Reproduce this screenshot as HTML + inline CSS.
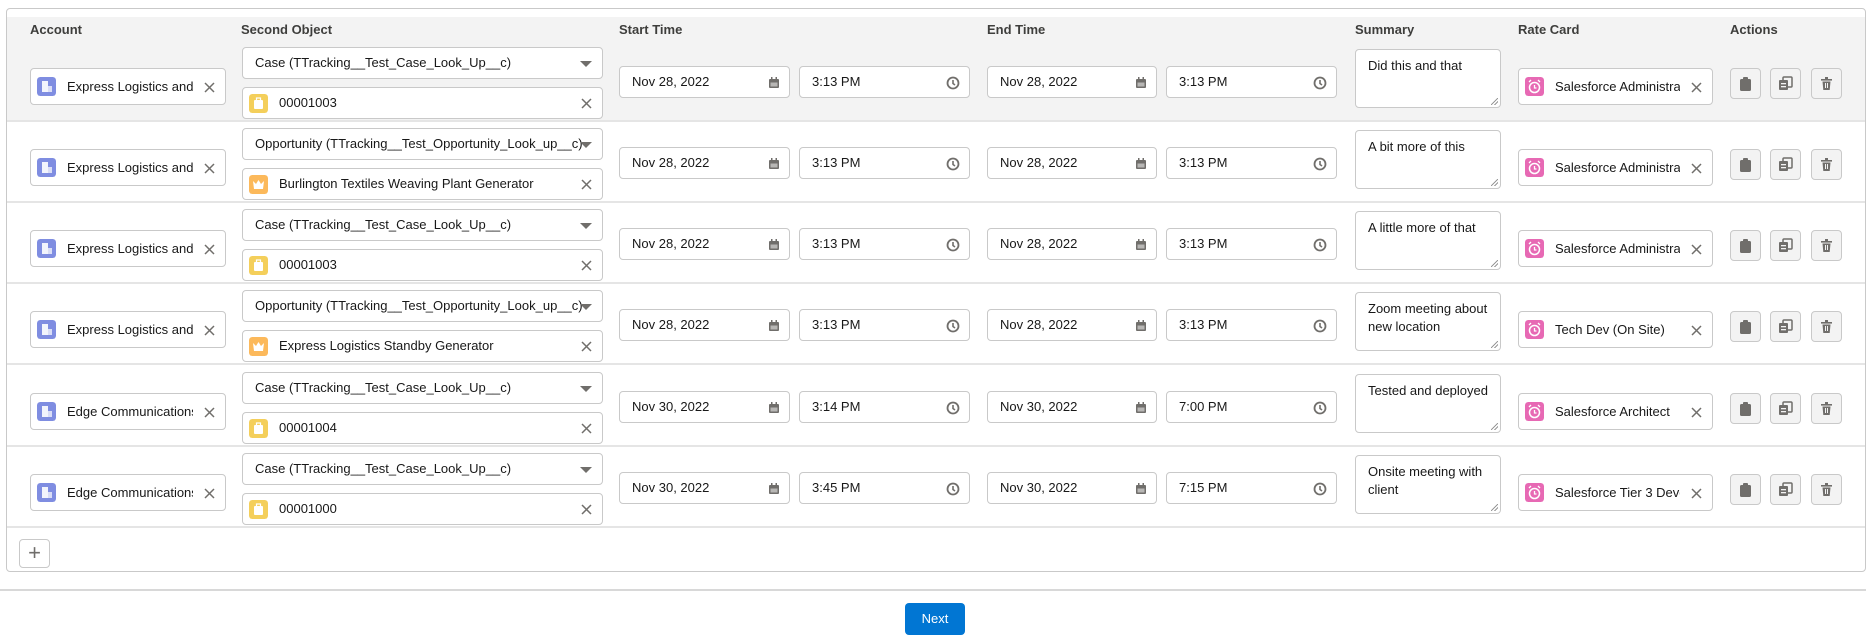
<!DOCTYPE html>
<html><head><meta charset="utf-8"><style>
*{box-sizing:border-box;margin:0;padding:0}
body{width:1873px;height:642px;background:#fff;position:relative;overflow:hidden;font-family:"Liberation Sans",Arial,sans-serif;font-size:13px;color:#181818}
.card{position:absolute;left:6px;top:8px;width:1860px;height:564px;border:1px solid #c9c9c9;border-radius:4px}
.hdr{position:absolute;left:7px;top:17px;width:1858px;height:26px;background:#f3f3f3;border-bottom:2px solid #e5e5e5}
.h{position:absolute;top:22px;font-weight:bold;font-size:13px;color:#3e3e3c}
.row{position:absolute;left:7px;width:1858px;height:81px;border-bottom:2px solid #e5e5e5}
.row.hl{background:#f3f3f3}
.b{position:absolute;background:#fff;border:1px solid #c9c9c9;border-radius:4px;white-space:nowrap;overflow:hidden}
.pill{height:37px;top:27px;line-height:35px}
.pill .t{position:absolute;left:36px;right:32px;overflow:hidden}
.ic{position:absolute;left:6px;top:8px;width:19px;height:19px;border-radius:3px}
.x{position:absolute;right:10px;top:50%;margin-top:-5px;width:11px;height:11px}
.sel{left:235px;width:361px;top:6px;height:32px;line-height:30px;padding-left:12px}
.sel:after{content:"";position:absolute;right:10px;top:13px;border-left:6px solid transparent;border-right:6px solid transparent;border-top:6px solid #706e6b}
.lk{left:235px;width:361px;top:46px;height:32px;line-height:30px}
.lk .t{position:absolute;left:36px}
.lk .ic{top:6px}
.d{top:25px;height:32px;line-height:30px;padding-left:12px}
.d svg{position:absolute;right:9px;top:9px}
.ta{left:1348px;width:146px;top:8px;height:59px;padding:7px 12px;line-height:18px;white-space:normal}
.ta:after{content:"";position:absolute;right:2px;bottom:2px;width:7px;height:7px;background:linear-gradient(135deg,transparent 45%,#999 46%,#999 54%,transparent 55%,transparent 70%,#999 71%,#999 79%,transparent 80%)}
.act{position:absolute;top:27px;width:31px;height:31px;background:#f3f3f3;border:1px solid #c9c9c9;border-radius:4px}
.act svg{position:absolute;left:7px;top:7px}
</style></head><body>
<div class="card"></div>
<div class="hdr"></div>
<div class="h" style="left:30px">Account</div>
<div class="h" style="left:241px">Second Object</div>
<div class="h" style="left:619px">Start Time</div>
<div class="h" style="left:987px">End Time</div>
<div class="h" style="left:1355px">Summary</div>
<div class="h" style="left:1518px">Rate Card</div>
<div class="h" style="left:1730px">Actions</div>

<svg width="0" height="0" style="position:absolute"><defs>
<g id="acc"><rect width="19" height="19" rx="3" fill="#7f8de1"/><rect x="5" y="4" width="6" height="11" fill="#fff" opacity=".9"/><rect x="11" y="9" width="4" height="6" fill="#fff" opacity=".7"/></g>
<g id="case"><rect width="19" height="19" rx="3" fill="#f4cf5b"/><rect x="5" y="6" width="9" height="9" rx="1" fill="#fff"/><rect x="7.5" y="4" width="4" height="3" fill="none" stroke="#fff" stroke-width="1.2"/></g>
<g id="opp"><rect width="19" height="19" rx="3" fill="#fcb95b"/><path d="M4 6l3 3 2.5-4 2.5 4 3-3-1 8H5z" fill="#fff"/></g>
<g id="rate"><rect width="19" height="19" rx="3" fill="#e769b4"/><circle cx="9.5" cy="10.5" r="5" fill="none" stroke="#fff" stroke-width="1.5"/><path d="M9.5 8v3h2M4 5l2-2M15 5l-2-2" stroke="#fff" stroke-width="1.3" fill="none"/></g>
<g id="cal"><rect x="1" y="3" width="10" height="9" rx="1" fill="#706e6b"/><rect x="3" y="1" width="1.5" height="3" fill="#706e6b"/><rect x="7.5" y="1" width="1.5" height="3" fill="#706e6b"/><rect x="2.5" y="6.5" width="7" height="4" fill="#fff" opacity=".5"/></g>
<g id="clk"><circle cx="7" cy="7" r="5.5" fill="none" stroke="#706e6b" stroke-width="1.8"/><path d="M7 4v3.5l2 1.5" stroke="#706e6b" stroke-width="1.6" fill="none"/></g>
<g id="clip"><rect x="2" y="3" width="11" height="12" rx="1.5" fill="#706e6b"/><rect x="5" y="1" width="5" height="3" rx="1" fill="#706e6b"/></g>
<g id="copy"><rect x="5" y="1" width="9" height="10" rx="1" fill="none" stroke="#706e6b" stroke-width="1.5"/><rect x="1" y="4" width="9" height="10" rx="1" fill="#706e6b"/><rect x="3" y="7" width="5" height="1.3" fill="#f3f3f3"/><rect x="3" y="10" width="5" height="1.3" fill="#f3f3f3"/></g>
<g id="del"><rect x="2" y="3" width="11" height="1.6" fill="#706e6b"/><rect x="6" y="1" width="3" height="2" fill="#706e6b"/><path d="M3.5 5.5h8l-.8 8.5h-6.4z" fill="#706e6b"/><rect x="6" y="7" width="1" height="5" fill="#f3f3f3"/><rect x="8" y="7" width="1" height="5" fill="#f3f3f3"/></g>
<g id="xx"><path d="M1 1L10 10M10 1L1 10" stroke="#706e6b" stroke-width="1.5"/></g>
</defs></svg>

<!-- ROW 1 -->
<div class="row hl" style="top:41px;height:81px">
<div class="b pill" style="left:23px;width:196px"><svg class="ic"><use href="#acc"/></svg><span class="t">Express Logistics and T</span><svg class="x"><use href="#xx"/></svg></div>
<div class="b sel">Case (TTracking__Test_Case_Look_Up__c)</div>
<div class="b lk"><svg class="ic"><use href="#case"/></svg><span class="t">00001003</span><svg class="x"><use href="#xx"/></svg></div>
<div class="b d" style="left:612px;width:171px">Nov 28, 2022<svg width="12" height="13"><use href="#cal"/></svg></div>
<div class="b d" style="left:792px;width:171px">3:13 PM<svg width="14" height="14"><use href="#clk"/></svg></div>
<div class="b d" style="left:980px;width:170px">Nov 28, 2022<svg width="12" height="13"><use href="#cal"/></svg></div>
<div class="b d" style="left:1159px;width:171px">3:13 PM<svg width="14" height="14"><use href="#clk"/></svg></div>
<div class="b ta">Did this and that</div>
<div class="b pill" style="left:1511px;width:195px"><svg class="ic"><use href="#rate"/></svg><span class="t">Salesforce Administrat</span><svg class="x"><use href="#xx"/></svg></div>
<div class="act" style="left:1723px"><svg width="15" height="15"><use href="#clip"/></svg></div>
<div class="act" style="left:1763px"><svg width="15" height="15"><use href="#copy"/></svg></div>
<div class="act" style="left:1804px"><svg width="15" height="15"><use href="#del"/></svg></div>
</div>

<!-- ROW 2 -->
<div class="row" style="top:122px">
<div class="b pill" style="left:23px;width:196px"><svg class="ic"><use href="#acc"/></svg><span class="t">Express Logistics and T</span><svg class="x"><use href="#xx"/></svg></div>
<div class="b sel">Opportunity (TTracking__Test_Opportunity_Look_up__c)</div>
<div class="b lk"><svg class="ic"><use href="#opp"/></svg><span class="t">Burlington Textiles Weaving Plant Generator</span><svg class="x"><use href="#xx"/></svg></div>
<div class="b d" style="left:612px;width:171px">Nov 28, 2022<svg width="12" height="13"><use href="#cal"/></svg></div>
<div class="b d" style="left:792px;width:171px">3:13 PM<svg width="14" height="14"><use href="#clk"/></svg></div>
<div class="b d" style="left:980px;width:170px">Nov 28, 2022<svg width="12" height="13"><use href="#cal"/></svg></div>
<div class="b d" style="left:1159px;width:171px">3:13 PM<svg width="14" height="14"><use href="#clk"/></svg></div>
<div class="b ta">A bit more of this</div>
<div class="b pill" style="left:1511px;width:195px"><svg class="ic"><use href="#rate"/></svg><span class="t">Salesforce Administrat</span><svg class="x"><use href="#xx"/></svg></div>
<div class="act" style="left:1723px"><svg width="15" height="15"><use href="#clip"/></svg></div>
<div class="act" style="left:1763px"><svg width="15" height="15"><use href="#copy"/></svg></div>
<div class="act" style="left:1804px"><svg width="15" height="15"><use href="#del"/></svg></div>
</div>

<!-- ROW 3 -->
<div class="row" style="top:203px">
<div class="b pill" style="left:23px;width:196px"><svg class="ic"><use href="#acc"/></svg><span class="t">Express Logistics and T</span><svg class="x"><use href="#xx"/></svg></div>
<div class="b sel">Case (TTracking__Test_Case_Look_Up__c)</div>
<div class="b lk"><svg class="ic"><use href="#case"/></svg><span class="t">00001003</span><svg class="x"><use href="#xx"/></svg></div>
<div class="b d" style="left:612px;width:171px">Nov 28, 2022<svg width="12" height="13"><use href="#cal"/></svg></div>
<div class="b d" style="left:792px;width:171px">3:13 PM<svg width="14" height="14"><use href="#clk"/></svg></div>
<div class="b d" style="left:980px;width:170px">Nov 28, 2022<svg width="12" height="13"><use href="#cal"/></svg></div>
<div class="b d" style="left:1159px;width:171px">3:13 PM<svg width="14" height="14"><use href="#clk"/></svg></div>
<div class="b ta">A little more of that</div>
<div class="b pill" style="left:1511px;width:195px"><svg class="ic"><use href="#rate"/></svg><span class="t">Salesforce Administrat</span><svg class="x"><use href="#xx"/></svg></div>
<div class="act" style="left:1723px"><svg width="15" height="15"><use href="#clip"/></svg></div>
<div class="act" style="left:1763px"><svg width="15" height="15"><use href="#copy"/></svg></div>
<div class="act" style="left:1804px"><svg width="15" height="15"><use href="#del"/></svg></div>
</div>

<!-- ROW 4 -->
<div class="row" style="top:284px">
<div class="b pill" style="left:23px;width:196px"><svg class="ic"><use href="#acc"/></svg><span class="t">Express Logistics and T</span><svg class="x"><use href="#xx"/></svg></div>
<div class="b sel">Opportunity (TTracking__Test_Opportunity_Look_up__c)</div>
<div class="b lk"><svg class="ic"><use href="#opp"/></svg><span class="t">Express Logistics Standby Generator</span><svg class="x"><use href="#xx"/></svg></div>
<div class="b d" style="left:612px;width:171px">Nov 28, 2022<svg width="12" height="13"><use href="#cal"/></svg></div>
<div class="b d" style="left:792px;width:171px">3:13 PM<svg width="14" height="14"><use href="#clk"/></svg></div>
<div class="b d" style="left:980px;width:170px">Nov 28, 2022<svg width="12" height="13"><use href="#cal"/></svg></div>
<div class="b d" style="left:1159px;width:171px">3:13 PM<svg width="14" height="14"><use href="#clk"/></svg></div>
<div class="b ta">Zoom meeting about new location</div>
<div class="b pill" style="left:1511px;width:195px"><svg class="ic"><use href="#rate"/></svg><span class="t">Tech Dev (On Site)</span><svg class="x"><use href="#xx"/></svg></div>
<div class="act" style="left:1723px"><svg width="15" height="15"><use href="#clip"/></svg></div>
<div class="act" style="left:1763px"><svg width="15" height="15"><use href="#copy"/></svg></div>
<div class="act" style="left:1804px"><svg width="15" height="15"><use href="#del"/></svg></div>
</div>

<!-- ROW 5 -->
<div class="row" style="top:366px">
<div class="b pill" style="left:23px;width:196px"><svg class="ic"><use href="#acc"/></svg><span class="t">Edge Communications</span><svg class="x"><use href="#xx"/></svg></div>
<div class="b sel">Case (TTracking__Test_Case_Look_Up__c)</div>
<div class="b lk"><svg class="ic"><use href="#case"/></svg><span class="t">00001004</span><svg class="x"><use href="#xx"/></svg></div>
<div class="b d" style="left:612px;width:171px">Nov 30, 2022<svg width="12" height="13"><use href="#cal"/></svg></div>
<div class="b d" style="left:792px;width:171px">3:14 PM<svg width="14" height="14"><use href="#clk"/></svg></div>
<div class="b d" style="left:980px;width:170px">Nov 30, 2022<svg width="12" height="13"><use href="#cal"/></svg></div>
<div class="b d" style="left:1159px;width:171px">7:00 PM<svg width="14" height="14"><use href="#clk"/></svg></div>
<div class="b ta">Tested and deployed</div>
<div class="b pill" style="left:1511px;width:195px"><svg class="ic"><use href="#rate"/></svg><span class="t">Salesforce Architect</span><svg class="x"><use href="#xx"/></svg></div>
<div class="act" style="left:1723px"><svg width="15" height="15"><use href="#clip"/></svg></div>
<div class="act" style="left:1763px"><svg width="15" height="15"><use href="#copy"/></svg></div>
<div class="act" style="left:1804px"><svg width="15" height="15"><use href="#del"/></svg></div>
</div>

<!-- ROW 6 -->
<div class="row" style="top:447px">
<div class="b pill" style="left:23px;width:196px"><svg class="ic"><use href="#acc"/></svg><span class="t">Edge Communications</span><svg class="x"><use href="#xx"/></svg></div>
<div class="b sel">Case (TTracking__Test_Case_Look_Up__c)</div>
<div class="b lk"><svg class="ic"><use href="#case"/></svg><span class="t">00001000</span><svg class="x"><use href="#xx"/></svg></div>
<div class="b d" style="left:612px;width:171px">Nov 30, 2022<svg width="12" height="13"><use href="#cal"/></svg></div>
<div class="b d" style="left:792px;width:171px">3:45 PM<svg width="14" height="14"><use href="#clk"/></svg></div>
<div class="b d" style="left:980px;width:170px">Nov 30, 2022<svg width="12" height="13"><use href="#cal"/></svg></div>
<div class="b d" style="left:1159px;width:171px">7:15 PM<svg width="14" height="14"><use href="#clk"/></svg></div>
<div class="b ta">Onsite meeting with client</div>
<div class="b pill" style="left:1511px;width:195px"><svg class="ic"><use href="#rate"/></svg><span class="t">Salesforce Tier 3 Deve</span><svg class="x"><use href="#xx"/></svg></div>
<div class="act" style="left:1723px"><svg width="15" height="15"><use href="#clip"/></svg></div>
<div class="act" style="left:1763px"><svg width="15" height="15"><use href="#copy"/></svg></div>
<div class="act" style="left:1804px"><svg width="15" height="15"><use href="#del"/></svg></div>
</div>

<div style="position:absolute;left:19px;top:539px;width:31px;height:29px;border:1px solid #c9c9c9;border-radius:4px;background:#fff;color:#706e6b;font-size:22px;line-height:26px;text-align:center">+</div>
<div style="position:absolute;left:0;top:589px;width:1866px;height:2px;background:#d8d8d8"></div>
<div style="position:absolute;left:905px;top:603px;width:60px;height:32px;background:#0176d3;border-radius:4px;color:#fff;font-size:13px;line-height:32px;text-align:center">Next</div>
</body></html>
